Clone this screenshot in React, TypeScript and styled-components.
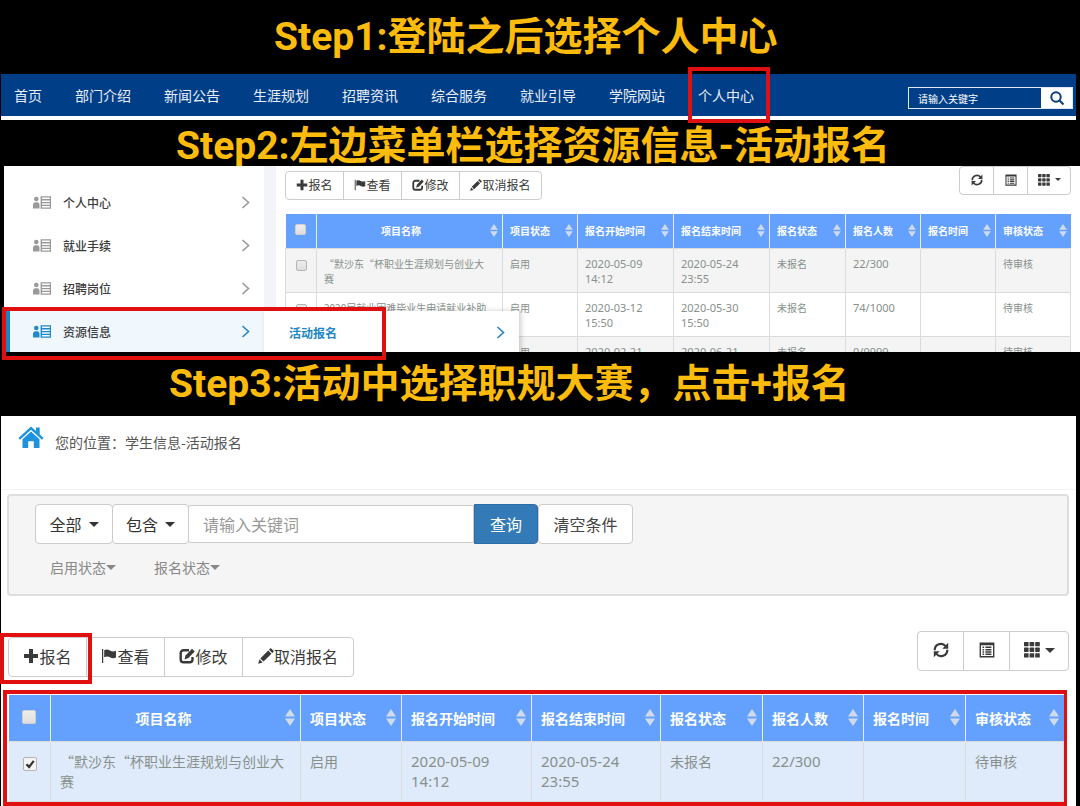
import React from "react";
import styled, { createGlobalStyle, css } from "styled-components";

const GlobalStyle = createGlobalStyle`
  * { box-sizing: border-box; }
  body {
    margin: 0;
    background: #000;
    color: #444;
    font-family: "Noto Sans CJK SC", "Noto Sans", sans-serif;
    font-size: 14px;
  }
  button, input, select { font-family: inherit; margin: 0; }
`;

const StepTitle = styled.h1<{ $height: number; $indent: number; $top?: number }>`
  margin: 0;
  height: ${(p) => p.$height}px;
  padding: ${(p) => p.$top || 0}px 0 0 ${(p) => p.$indent}px;
  display: flex;
  align-items: center;
  color: #fdbb0c;
  font: 700 39px/46px Roboto, "Noto Sans CJK SC", sans-serif;
  white-space: nowrap;
`;

const Highlight = styled.span<{ $inset: string; $width?: number }>`
  position: absolute;
  inset: ${(p) => p.$inset};
  width: ${(p) => (p.$width ? p.$width + "px" : "auto")};
  border: 4px solid #e01010;
  z-index: 3;
  pointer-events: none;
`;

/* ---------- site navigation ---------- */

const SiteNav = styled.nav`
  margin: 0 4px 0 1px;
  height: 46px;
  padding: 0 3px 0 13px;
  display: flex;
  align-items: stretch;
  gap: 33px;
  background: #003f88;
  border-bottom: 4px solid #fff;
`;

const NavLink = styled.a`
  position: relative;
  display: flex;
  align-items: center;
  color: #e8eef8;
  font-size: 14px;
  text-decoration: none;
  white-space: nowrap;
`;

const SiteSearch = styled.form`
  margin: 13px 0 0 auto;
  height: 22px;
  display: flex;
  border: 1px solid #dfe8f5;
`;

const SiteSearchInput = styled.input`
  width: 132px;
  padding: 0 9px;
  border: 0;
  background: transparent;
  color: #fff;
  font-size: 10px;
  &::placeholder { color: #fff; opacity: 1; }
`;

const SiteSearchButton = styled.button`
  width: 31px;
  padding: 0;
  border: 0;
  display: grid;
  place-items: center;
  background: #fff;
  color: #0b3f80;
`;

/* ---------- menu screen ---------- */

const MenuScreen = styled.section`
  position: relative;
  margin-left: 4px;
`;

const MenuClip = styled.div`
  position: relative;
  height: 186px;
  overflow: hidden;
  display: flex;
  background: #fff;
`;

const SideMenu = styled.nav`
  flex: 0 0 260px;
  padding-top: 15px;
`;

const SideLink = styled.a<{ $active?: boolean }>`
  height: 43px;
  padding: 0 14px 0 29px;
  display: flex;
  align-items: center;
  gap: 12px;
  color: #3c3c3c;
  font-size: 12px;
  font-weight: 500;
  text-decoration: none;
  svg { color: #999; }
  ${(p) =>
    p.$active &&
    css`
      margin-left: 2px;
      padding-left: 23px;
      border-left: 4px solid #1c84c0;
      background: #f0f8fe;
      svg { color: #2288cc; }
    `}
`;

const SideText = styled.span`
  flex: 1;
`;

const Flyout = styled.div`
  position: absolute;
  left: 260px;
  top: 145px;
  width: 255px;
  height: 43px;
  padding: 0 14px 0 25px;
  display: flex;
  align-items: center;
  justify-content: space-between;
  background: #fff;
  box-shadow: 2px 0 5px rgba(0, 0, 0, 0.2);
  color: #2087c4;
  z-index: 2;
`;

const FlyoutLink = styled.a`
  color: inherit;
  font-size: 12px;
  font-weight: 700;
  text-decoration: none;
`;

const MenuContent = styled.div`
  flex: 1;
  min-width: 0;
  padding-right: 9px;
  padding-left: 9px;
  border-left: 12px solid #f3f4fa;
`;

/* ---------- toolbars ---------- */

const Toolbar = styled.div<{ $large?: boolean }>`
  display: flex;
  justify-content: space-between;
  align-items: flex-start;
  ${(p) => (p.$large ? "padding: 35px 7px 0 7px;" : "height: 48px;")}
`;

const ButtonGroup = styled.div<{ $drop?: number }>`
  display: flex;
  margin-top: ${(p) => p.$drop || 0}px;
`;

const ToolButton = styled.button<{ $large?: boolean; $width?: number }>`
  position: relative;
  height: ${(p) => (p.$large ? 40 : 29)}px;
  width: ${(p) => (p.$width ? p.$width + "px" : "auto")};
  padding: 0 0 2px;
  display: flex;
  align-items: center;
  justify-content: center;
  background: #fff;
  border: 1px solid #ccc;
  color: #3a3a3a;
  font-size: ${(p) => (p.$large ? 16 : 12)}px;
  white-space: nowrap;
  & + & { margin-left: -1px; }
  &:first-child { border-radius: 4px 0 0 4px; }
  &:last-child { border-radius: 0 4px 4px 0; }
`;

const CaretGap = styled.span`
  display: flex;
  margin-left: 5px;
`;

/* ---------- data table ---------- */

const Table = styled.table<{ $large?: boolean }>`
  width: 100%;
  table-layout: fixed;
  border-collapse: collapse;
  color: #87908b;
  font-size: ${(p) => (p.$large ? 14 : 10)}px;
  line-height: ${(p) => (p.$large ? 20 : 15)}px;
`;

const HeadCell = styled.th<{ $large?: boolean }>`
  height: ${(p) => (p.$large ? 46 : 34)}px;
  padding: ${(p) => (p.$large ? "0 5px 0 9px" : "0 4px 0 7px")};
  background: #64a1ff;
  border-left: 1px solid #e4eefc;
  color: #fff;
  text-align: left;
  white-space: nowrap;
  &:first-child { padding: 0; border-left: 0; text-align: center; }
`;

const HeadInner = styled.div<{ $center?: boolean; $large?: boolean }>`
  display: flex;
  align-items: center;
  justify-content: space-between;
  span {
    flex: 1;
    ${(p) => p.$center && `text-align: center; padding-right: ${p.$large ? 18 : 12}px;`}
  }
`;

const Row = styled.tr<{ $tone: string }>`
  background: ${(p) => p.$tone};
`;

const Cell = styled.td<{ $large?: boolean; $numeric?: boolean }>`
  height: ${(p) => (p.$large ? 60 : 44)}px;
  padding: ${(p) => (p.$large ? "9px 8px 0 9px" : "7px 9px 0 7px")};
  border: 1px solid #d9dcdd;
  vertical-align: top;
  ${(p) =>
    p.$numeric &&
    css`
      font-family: "Noto Sans", sans-serif;
      font-size: ${p.$large ? 15 : 11}px;
      padding-right: 0;
    `}
  &:first-child { padding-left: 0; padding-right: 0; text-align: center; }
  ${(p) => p.$large && "&:first-child { border-left-color: transparent; }"}
`;

const Check = styled.input<{ $large?: boolean }>`
  && { margin: 0; }
  appearance: none;
  width: ${(p) => (p.$large ? 14 : 11)}px;
  height: ${(p) => (p.$large ? 14 : 11)}px;
  vertical-align: ${(p) => (p.$large ? "-4px" : "-3px")};
  border: 1px solid #b4b4b4;
  border-radius: 2px;
  background: linear-gradient(#ececec, #dedede);
  th & { vertical-align: 0; border-color: #cfcfcf; }
  &:checked {
    background: #f4f4f4
      url("data:image/svg+xml,%3Csvg xmlns='http://www.w3.org/2000/svg' viewBox='0 0 12 12'%3E%3Cpath d='M2.5 6.2l2.6 2.8L9.8 2.8' fill='none' stroke='%23333' stroke-width='2.2'/%3E%3C/svg%3E")
      center / 12px no-repeat;
  }
`;

/* ---------- enrolment screen ---------- */

const EnrolScreen = styled.section`
  margin: 0 4px 0 1px;
  background: #fff;
`;

const Breadcrumb = styled.div`
  height: 74px;
  padding: 10px 0 0 17px;
  display: flex;
  align-items: flex-start;
  gap: 11px;
  border-bottom: 1px solid #f3f3f3;
  color: #555;
  line-height: 32px;
  svg { color: #1c93dc; }
`;

const FilterPanel = styled.form`
  margin: 4px 7px 0 6px;
  height: 102px;
  padding: 8px 0 0 26px;
  background: #f5f5f5;
  border: 2px solid #dedede;
  border-radius: 4px;
`;

const FilterRow = styled.div`
  display: flex;
  align-items: center;
`;

const SelectWrap = styled.label<{ $width: number; $plain?: boolean }>`
  display: flex;
  align-items: center;
  width: ${(p) => p.$width}px;
  height: 40px;
  ${(p) =>
    p.$plain
      ? "color: #888;"
      : css`
          justify-content: center;
          gap: 6px;
          margin-right: -1px;
          background: #fff;
          border: 1px solid #ccc;
          border-radius: 4px;
          color: #333;
        `}
`;

const Select = styled.select<{ $plain?: boolean }>`
  appearance: none;
  padding: 0;
  border: 0;
  background: transparent;
  color: inherit;
  font-size: ${(p) => (p.$plain ? 14 : 16)}px;
`;

const KeywordInput = styled.input`
  width: 286px;
  height: 38px;
  padding: 0 14px;
  border: 1px solid #ccc;
  border-radius: 3px 0 0 3px;
  background: #fff;
  font-size: 16px;
  &::placeholder { color: #999; opacity: 1; }
`;

const FormButton = styled.button<{ $primary?: boolean }>`
  height: 40px;
  width: ${(p) => (p.$primary ? 64 : 95)}px;
  padding: 0;
  border: 1px solid ${(p) => (p.$primary ? "#2e6da4" : "#ccc")};
  border-radius: ${(p) => (p.$primary ? "0 4px 4px 0" : "4px")};
  background: ${(p) => (p.$primary ? "#337ab7" : "#fff")};
  color: ${(p) => (p.$primary ? "#fff" : "#444")};
  font-size: 16px;
`;

const FilterLinks = styled.div`
  display: flex;
  gap: 32px;
  padding: 3px 0 0 15px;
`;

const TableFrame = styled.div`
  margin: 13px 9px 0 2px;
  padding: 1px 0 0 1px;
  border: 4px solid #e01010;
  border-right-width: 3px;
`;

/* ---------- icons ---------- */

type IconProps = { size: number };

const Svg = ({ size, children }: { size: number; children: React.ReactNode }) => (
  <svg width={size} height={size} viewBox="0 0 16 16" fill="currentColor" aria-hidden="true">
    {children}
  </svg>
);

const PlusIcon = ({ size }: IconProps) => (
  <Svg size={size}><path d="M6 1h4v5h5v4h-5v5H6v-5H1V6h5z" /></Svg>
);
const FlagIcon = ({ size }: IconProps) => (
  <Svg size={size}>
    <path d="M1 1h1.200v14H1z" />
    <path d="M3.200 2.200C5.400 1 7.200 1.500 9 2.600c1.900 1.100 3.800 1.200 6 .2v6.800c-2.200 1-4.200.8-6-.3-1.700-1-3.600-1.200-5.800 0z" />
  </Svg>
);
const EditIcon = ({ size }: IconProps) => (
  <Svg size={size}>
    <path d="M10 2.300H4.500a2.800 2.800 0 0 0-2.800 2.800v6.400a2.800 2.800 0 0 0 2.800 2.800h6.200a2.800 2.800 0 0 0 2.800-2.800V9" fill="none" stroke="currentColor" strokeWidth="2.400" />
    <path d="M5.500 11.500l1-4L13 .8l2.700 2.600L9.400 10z" />
  </Svg>
);
const PencilIcon = ({ size }: IconProps) => (
  <Svg size={size}><path d="M12.700 0L16 3.200l-1.700 1.700L11 1.700zM10.200 2.500l3.300 3.200-8 7.900-3.200-3.200zM1.500 11.300l3.200 3.200L.2 15.800z" /></Svg>
);
const RefreshIcon = ({ size }: IconProps) => (
  <Svg size={size}>
    <path d="M1.700 8.200A6.200 6.200 0 0 1 12.600 4.100M14.300 7.800A6.200 6.200 0 0 1 3.400 11.900" fill="none" stroke="currentColor" strokeWidth="2.200" />
    <path d="M15.200.800v5.900H9.300zM.8 15.200V9.300h5.900z" />
  </Svg>
);
const ListIcon = ({ size }: IconProps) => (
  <Svg size={size}>
    <path d="M.6.500h14.800v15H.6zM2 3.200v10.900h12V3.200z" fillRule="evenodd" />
    <path d="M3.500 4.600h1.600v1.500H3.500zM3.500 7h1.600v1.500H3.500zM3.500 9.300h1.600v1.500H3.500zM3.500 11.600h1.600v1.500H3.500zM6.400 4.600h6v1.500h-6zM6.400 7h6v1.500h-6zM6.400 9.300h6v1.500h-6zM6.400 11.600h6v1.500h-6z" />
  </Svg>
);
const GridIcon = ({ size }: IconProps) => (
  <Svg size={size}>
    {[0, 5.6, 11.2].map((y) => [0, 5.6, 11.2].map((x) => <rect key={`${x}-${y}`} x={x} y={y} width="4.600" height="4.300" rx=".6" />))}
  </Svg>
);
const Caret = ({ size }: IconProps) => (
  <svg width={size} height={size / 2} viewBox="0 0 8 4" fill="currentColor" aria-hidden="true"><path d="M0 0h8L4 4z" /></svg>
);
const SortIcon = ({ large }: { large?: boolean }) => (
  <svg width={large ? 10 : 8} height={large ? 17 : 13} viewBox="0 0 10 17" fill="#cfdbe9" aria-hidden="true">
    <path d="M5 0l5 7.500H0zM5 17L0 9.500h10z" />
  </svg>
);
const MemberIcon = () => (
  <svg width="18" height="13" viewBox="0 0 18 13" fill="currentColor" aria-hidden="true">
    <circle cx="3.300" cy="3" r="2.300" />
    <path d="M0 12.500V9c0-1.800 1.300-2.800 2.300-2.800h2C5.500 6.200 6.500 7.200 6.500 9v3.500zM7.600.3h10.400v12.400H7.600zM9 1.600v1.500h7.800V1.600zM9 4.400v1.500h7.800V4.400zM9 7.200v1.500h7.800V7.200zM9 10v1.500h7.800V10z" fillRule="evenodd" />
  </svg>
);
const ChevronIcon = () => (
  <svg width="9" height="13" viewBox="0 0 9 13" fill="none" stroke="currentColor" strokeWidth="1.600" aria-hidden="true">
    <path d="M1.500 1l6 5.500-6 5.500" />
  </svg>
);
const SearchIcon = () => (
  <svg width="14" height="14" viewBox="0 0 14 14" fill="none" stroke="currentColor" strokeWidth="2" aria-hidden="true">
    <circle cx="6" cy="6" r="4.700" /><path d="M9.500 9.500l4 4" />
  </svg>
);
const HomeIcon = () => (
  <svg width="26" height="22" viewBox="0 0 26 22" fill="currentColor" aria-hidden="true">
    <path d="M13 .5l5 4.500V1.500h3.700v6.800L25.500 12l-1.500 1.700L13 3.700 2 13.700.5 12z" />
    <path d="M13 5.500l8.500 7.700V22h-5.700v-6.700h-5.600V22H4.500v-8.800z" />
  </svg>
);

/* ---------- data ---------- */

const navItems = ["首页", "部门介绍", "新闻公告", "生涯规划", "招聘资讯", "综合服务", "就业引导", "学院网站", "个人中心"];
const sideItems = ["个人中心", "就业手续", "招聘岗位", "资源信息"];
const columns = ["项目名称", "项目状态", "报名开始时间", "报名结束时间", "报名状态", "报名人数", "报名时间", "审核状态"];
const smallWidths = [31, 0, 75, 96, 96, 76, 75, 75, 75];
const largeWidths = [42, 0, 101, 130, 129, 102, 101, 102, 98];

const contest = ["“默沙东“杯职业生涯规划与创业大赛", "启用", "2020-05-09 14:12", "2020-05-24 23:55", "未报名", "22/300", "", "待审核"];
const activities = [
  contest,
  ["2020届就业困难毕业生申请就业补助", "启用", "2020-03-12 15:50", "2020-05-30 15:50", "未报名", "74/1000", "", "待审核"],
  ["", "启用", "2020-02-21", "2020-06-21", "未报名", "0/9999", "", "待审核"],
];

function ActivityTable({ rows, large, checked }: { rows: string[][]; large?: boolean; checked?: boolean }) {
  const widths = large ? largeWidths : smallWidths;
  return (
    <Table $large={large}>
      <colgroup>
        {widths.map((w, i) => <col key={i} width={w || undefined} />)}
      </colgroup>
      <thead>
        <tr>
          <HeadCell $large={large}><Check $large={large} type="checkbox" aria-label="全选" /></HeadCell>
          {columns.map((c, i) => (
            <HeadCell key={c} $large={large}>
              <HeadInner $center={i === 0} $large={large}><span>{c}</span><SortIcon large={large} /></HeadInner>
            </HeadCell>
          ))}
        </tr>
      </thead>
      <tbody>
        {rows.map((r, n) => (
          <Row key={n} $tone={large ? "#dfebfb" : n % 2 ? "#fff" : "#f4f4f4"}>
            <Cell $large={large}><Check $large={large} type="checkbox" defaultChecked={checked} aria-label={r[0] || "活动"} /></Cell>
            {r.map((v, i) => (
              <Cell key={i} $large={large} $numeric={i === 2 || i === 3 || i === 5}>{v}</Cell>
            ))}
          </Row>
        ))}
      </tbody>
    </Table>
  );
}

function Actions({ large }: { large?: boolean }) {
  const size = large ? 16 : 12;
  const w = large ? 79 : 59;
  return (
    <Toolbar $large={large}>
      <ButtonGroup $drop={large ? 6 : 5}>
        <ToolButton type="button" $large={large} $width={w}>
          <PlusIcon size={size} />报名
          {large && <Highlight $inset="-5px -6px -8px -9px" />}
        </ToolButton>
        <ToolButton type="button" $large={large} $width={w}><FlagIcon size={size} />查看</ToolButton>
        <ToolButton type="button" $large={large} $width={w}><EditIcon size={size} />修改</ToolButton>
        <ToolButton type="button" $large={large} $width={large ? 112 : 83}><PencilIcon size={size} />取消报名</ToolButton>
      </ButtonGroup>
      <ButtonGroup>
        <ToolButton type="button" aria-label="刷新" $large={large} $width={large ? 47 : 35}><RefreshIcon size={size} /></ToolButton>
        <ToolButton type="button" aria-label="切换" $large={large} $width={large ? 47 : 35}><ListIcon size={size} /></ToolButton>
        <ToolButton type="button" aria-label="列" $large={large} $width={large ? 60 : 44}>
          <GridIcon size={size} /><CaretGap><Caret size={large ? 10 : 6} /></CaretGap>
        </ToolButton>
      </ButtonGroup>
    </Toolbar>
  );
}

function DropDown({ text, width, plain }: { text: string; width: number; plain?: boolean }) {
  return (
    <SelectWrap $width={width} $plain={plain}>
      <Select $plain={plain} aria-label={text}><option>{text}</option></Select>
      <Caret size={10} />
    </SelectWrap>
  );
}

export default function App() {
  return (
    <main>
      <GlobalStyle />
      <StepTitle $height={74} $indent={274}>Step1:登陆之后选择个人中心</StepTitle>
      <SiteNav>
        {navItems.map((t, i) => (
          <NavLink key={t} href="#">
            {t}
            {i === navItems.length - 1 && <Highlight $inset="-7px -16px -7px -10px" />}
          </NavLink>
        ))}
        <SiteSearch>
          <SiteSearchInput type="search" aria-label="关键字" placeholder="请输入关键字" />
          <SiteSearchButton type="button" aria-label="搜索"><SearchIcon /></SiteSearchButton>
        </SiteSearch>
      </SiteNav>

      <StepTitle $height={46} $indent={176} $top={6}>Step2:左边菜单栏选择资源信息-活动报名</StepTitle>
      <MenuScreen>
        <MenuClip>
          <SideMenu>
            {sideItems.map((t, i) => (
              <SideLink key={t} href="#" $active={i === 3}>
                <MemberIcon /><SideText>{t}</SideText><ChevronIcon />
              </SideLink>
            ))}
          </SideMenu>
          <MenuContent>
            <Actions />
            <ActivityTable rows={activities} />
          </MenuContent>
          <Flyout><FlyoutLink href="#">活动报名</FlyoutLink><ChevronIcon /></Flyout>
        </MenuClip>
        <Highlight $inset="141px auto -8px -2px" $width={384} />
      </MenuScreen>

      <StepTitle $height={64} $indent={169}>Step3:活动中选择职规大赛，点击+报名</StepTitle>
      <EnrolScreen>
        <Breadcrumb><HomeIcon /><span>您的位置：学生信息-活动报名</span></Breadcrumb>
        <FilterPanel>
          <FilterRow>
            <DropDown text="全部" width={78} />
            <DropDown text="包含" width={77} />
            <KeywordInput aria-label="关键词" placeholder="请输入关键词" />
            <FormButton type="button" $primary>查询</FormButton>
            <FormButton type="button">清空条件</FormButton>
          </FilterRow>
          <FilterLinks>
            <DropDown text="启用状态" width={72} plain />
            <DropDown text="报名状态" width={72} plain />
          </FilterLinks>
        </FilterPanel>
        <Actions large />
        <TableFrame><ActivityTable rows={[contest]} large checked /></TableFrame>
      </EnrolScreen>
    </main>
  );
}
